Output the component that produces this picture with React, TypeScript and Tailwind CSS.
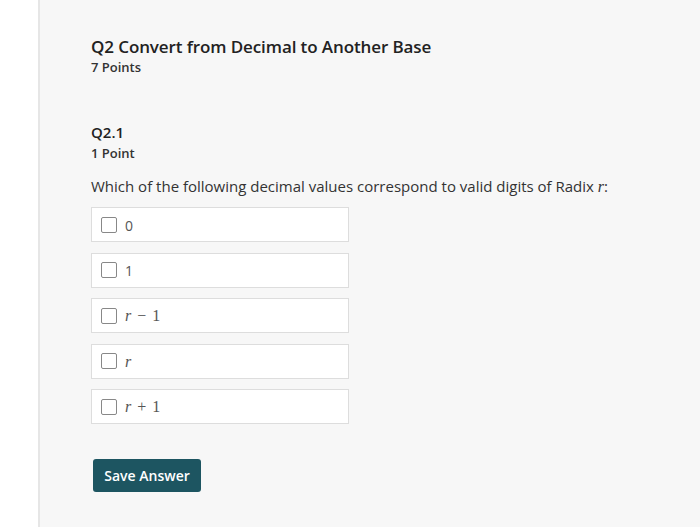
const options: { key: string; label: React.ReactNode }[] = [
  { key: "0", label: <span className="text-[14px] text-[#555]">0</span> },
  { key: "1", label: <span className="text-[14px] text-[#555]">1</span> },
  {
    key: "r-1",
    label: (
      <span className="font-['Liberation_Serif',serif] text-[16px] text-[#555]">
        <i>r</i>
        <span className="mx-[6px]">−</span>1
      </span>
    ),
  },
  {
    key: "r",
    label: (
      <span className="font-['Liberation_Serif',serif] text-[16px] text-[#555]">
        <i>r</i>
      </span>
    ),
  },
  {
    key: "r+1",
    label: (
      <span className="font-['Liberation_Serif',serif] text-[16px] text-[#555]">
        <i>r</i>
        <span className="mx-[6px]">+</span>1
      </span>
    ),
  },
];

const App = () => {
  return (
    <div className="flex min-h-[527px] bg-white font-['Open_Sans',sans-serif]">
      <div className="w-[38px] shrink-0 bg-white" />
      <div className="flex-1 border-l-2 border-[#e6e6e6] bg-[#f7f7f7] pl-[51px] pt-[36px]">
        <h2 className="text-[17px] font-semibold leading-[22px] tracking-[-0.1px] text-[#222]">
          Q2 Convert from Decimal to Another Base
        </h2>
        <p className="text-[13px] font-semibold leading-[18px] text-[#333]">7 Points</p>

        <h3 className="mt-[46px] text-[15px] font-semibold leading-[20px] text-[#222]">Q2.1</h3>
        <p className="mt-[2px] text-[13px] font-semibold leading-[18px] text-[#333]">1 Point</p>

        <p className="mt-[13px] text-[15px] leading-[22px] text-[#333]">
          Which of the following decimal values correspond to valid digits of Radix{" "}
          <i className="font-['Liberation_Serif',serif] text-[16px]">r</i>:
        </p>

        <div className="mt-[9px] flex flex-col gap-[10.5px]">
          {options.map((o) => (
            <label
              key={o.key}
              className="flex h-[35px] w-[258px] items-center border border-[#ddd] bg-white pl-[9px]"
            >
              <span className="h-[16px] w-[16px] rounded-[2px] border border-[#888] bg-white" />
              <span className="ml-[8px]">{o.label}</span>
            </label>
          ))}
        </div>

        <button className="ml-[2px] mt-[35px] h-[33px] w-[108px] rounded-[3px] bg-[#1d5561] text-[14px] font-semibold text-white">
          Save Answer
        </button>
      </div>
    </div>
  );
};

export default App;
